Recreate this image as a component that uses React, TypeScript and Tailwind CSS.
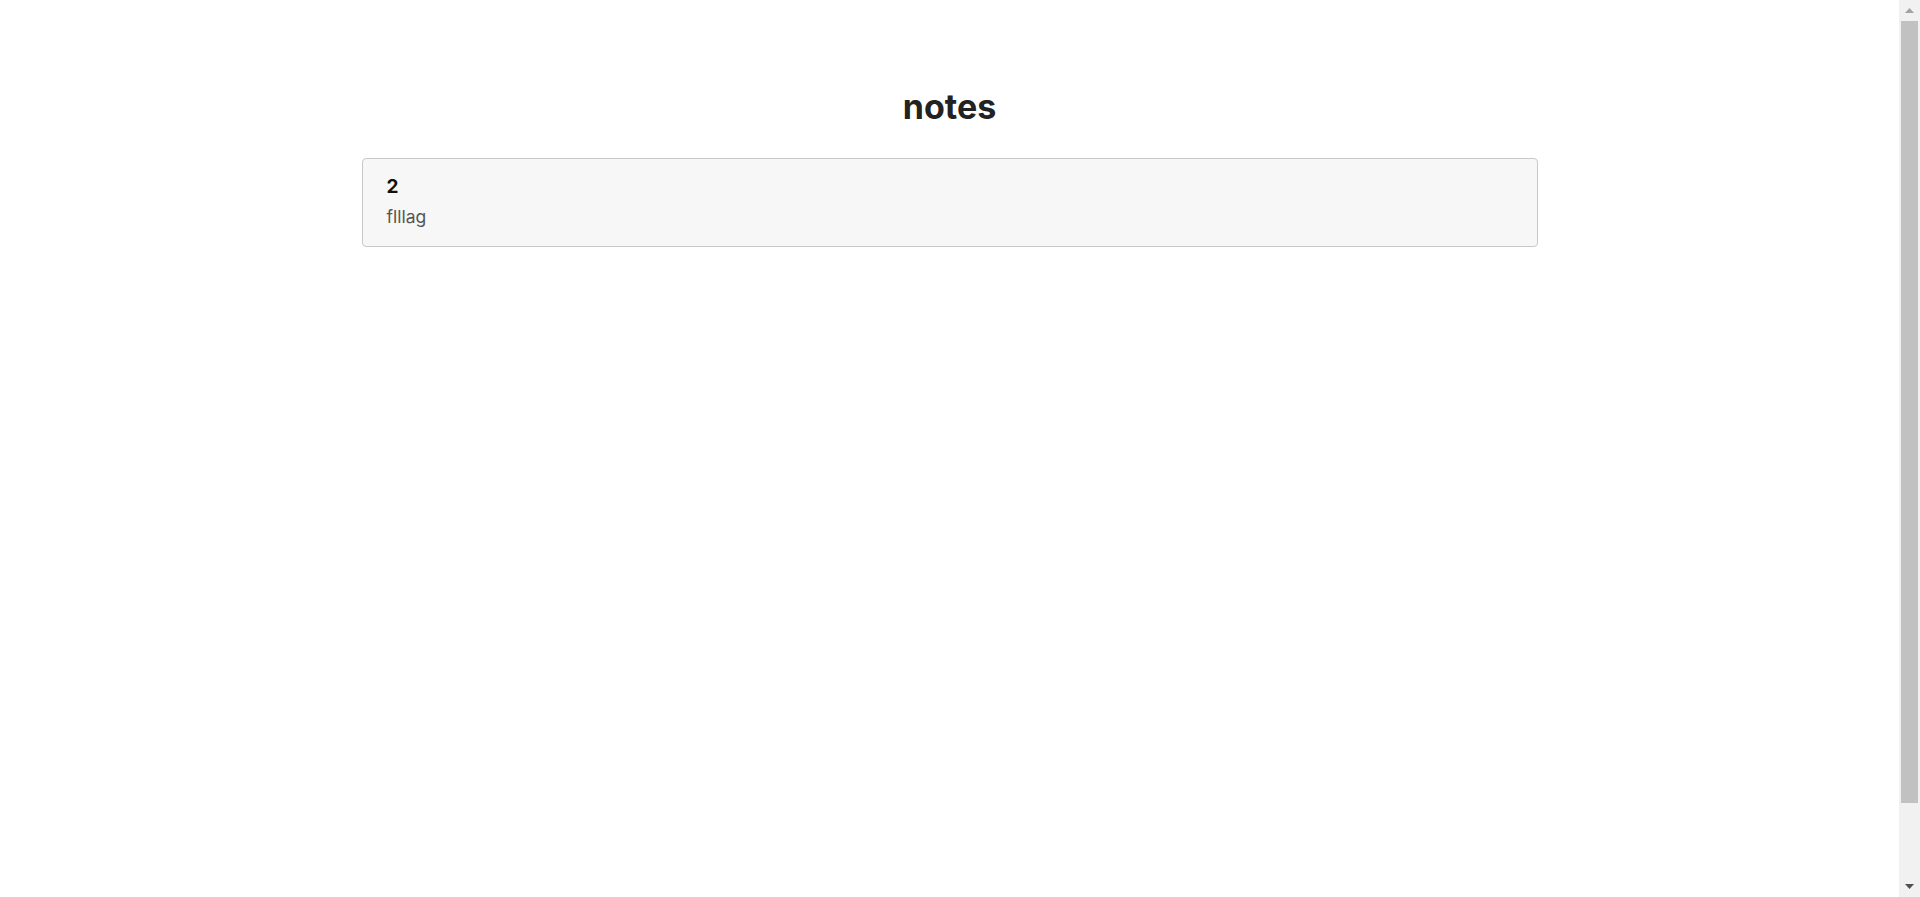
function Scrollbar() {
  return (
    <div className="flex h-full w-[21px] flex-col items-center bg-[#f1f1f1]">
      <div className="flex h-[21px] w-full items-center justify-center">
        <svg width="9" height="5" viewBox="0 0 9 5">
          <path d="M4.5 0 L9 5 L0 5 Z" fill="#a3a3a3" />
        </svg>
      </div>
      <div className="h-[782px] w-[17px] bg-[#c1c1c1]" />
      <div className="flex-1" />
      <div className="flex h-[21px] w-full items-center justify-center">
        <svg width="9" height="5" viewBox="0 0 9 5">
          <path d="M0 0 L9 0 L4.5 5 Z" fill="#505050" />
        </svg>
      </div>
    </div>
  )
}

export default function App() {
  return (
    <div className="flex h-[897px] overflow-hidden bg-white font-['Inter','Liberation_Sans',sans-serif]">
      <main className="flex-1">
        <div className="mx-auto w-[1176px] pt-[86px]">
          <h1 className="mb-[30px] text-center text-[34px] font-bold leading-[42px] text-[#222]">notes</h1>
          <div className="rounded border border-[#c8c8c8] bg-[#f7f7f7] px-6 pb-[19px] pt-[17px]">
            <h3 className="text-[19px] font-bold leading-[22px] text-[#111]">2</h3>
            <p className="mt-[9px] text-[17.5px] leading-[20px] text-[#555]">flllag</p>
          </div>
        </div>
      </main>
      <Scrollbar />
    </div>
  )
}
